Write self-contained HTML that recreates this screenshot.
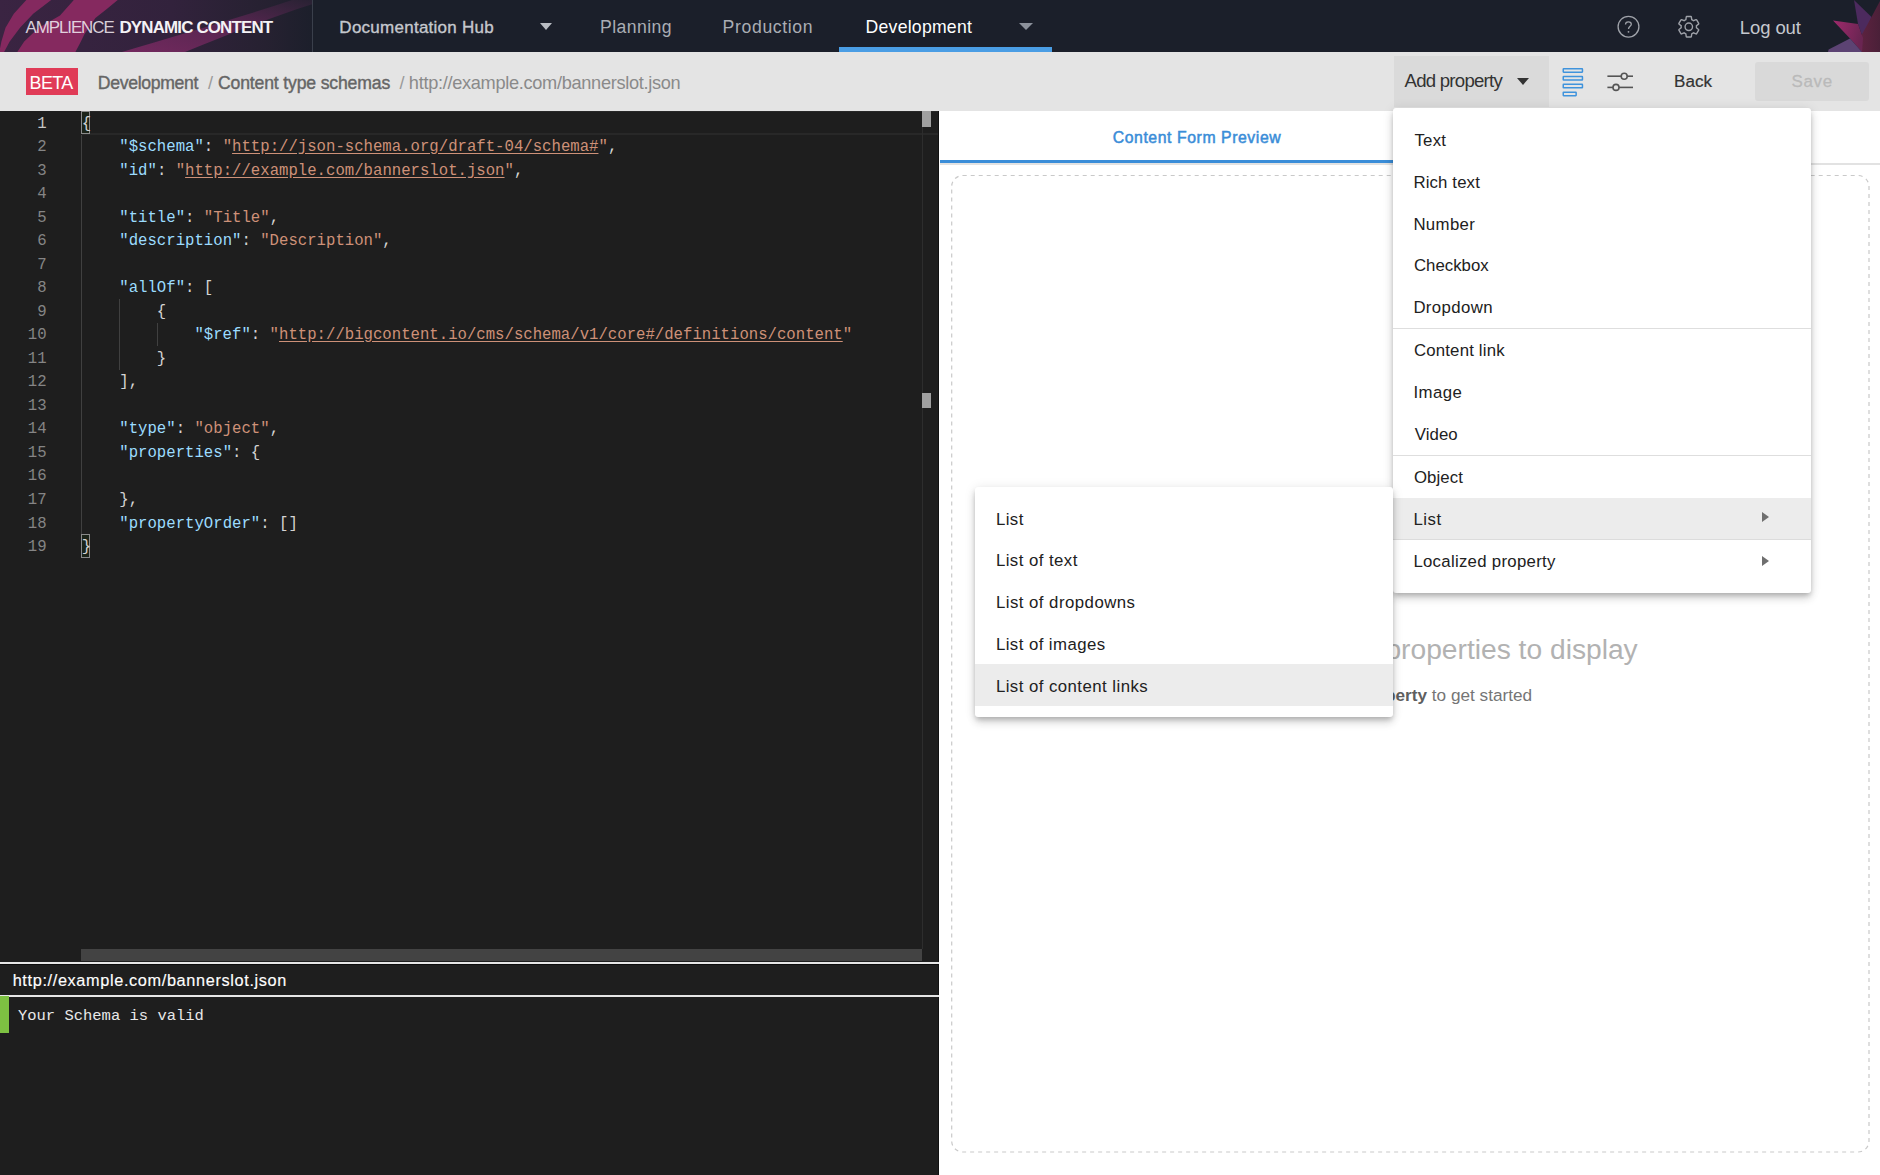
<!DOCTYPE html>
<html><head><meta charset="utf-8"><style>
html,body{margin:0;padding:0;width:1880px;height:1175px;overflow:hidden;background:#fff;position:relative}
.abs{position:absolute}
.t{position:absolute;white-space:pre;font-family:'Liberation Sans',sans-serif}
.m{font-family:'Liberation Mono',monospace}
.tri{width:0;height:0}
.menu{background:#fff;border-radius:3px;box-shadow:0 3px 5px -1px rgba(0,0,0,.2),0 6px 8px 0 rgba(0,0,0,.12),0 1px 12px 0 rgba(0,0,0,.10)}
</style></head><body>
<div class="abs" style="left:0;top:0;width:1880px;height:52px;background:#1b1f2a"></div>
<svg class="abs" style="left:0;top:0" width="313" height="52" viewBox="0 0 313 52">
<defs>
<linearGradient id="lg" x1="0" y1="0" x2="1" y2="0"><stop offset="0" stop-color="#3a2442"/><stop offset="0.55" stop-color="#32223c"/><stop offset="0.85" stop-color="#262131"/><stop offset="1" stop-color="#1c1f2b"/></linearGradient>
<linearGradient id="b3" x1="0" y1="1" x2="1" y2="0"><stop offset="0" stop-color="#7e2a64"/><stop offset="0.6" stop-color="#5a2652"/><stop offset="1" stop-color="#2a2234"/></linearGradient>
</defs>
<rect width="313" height="52" fill="url(#lg)"/>
<polygon points="26.3,0 51.2,0 33.2,13.8 20,27.7 9.7,41.5 4.1,52 0,52 0,48.4 1.4,41.5 5.5,27.7 13.8,13.8" fill="#84295f"/>
<polygon points="73.8,0 117.7,0 106.5,9.3 95.4,17.9 84.4,34.2 80.9,41.5 75.4,52 17.3,52 24.2,41.5 38.7,27.7 60,15.6" fill="#85295f"/>
<path d="M122,52 L185,52 C225,36 268,18 313,4 L313,0 L292,0 C235,19 175,36 122,52 Z" fill="url(#b3)" opacity="0.85"/>
</svg>
<div class="abs" style="left:312px;top:0;width:1px;height:52px;background:#3a3f4b"></div>
<div class="t" style="left:25.50px;top:20px;font-size:16.93px;line-height:16.93px;color:rgba(240,232,240,0.88);letter-spacing:-1.077px;">AMPLIENCE</div>
<div class="t" style="left:119.44px;top:20px;font-size:16.93px;line-height:16.93px;color:#f4f2f5;letter-spacing:-0.837px;font-weight:700;">DYNAMIC CONTENT</div>
<div class="t" style="left:339.35px;top:19px;font-size:17.00px;line-height:17.00px;color:#c5c8ce;letter-spacing:0.258px;-webkit-text-stroke:0.35px #c5c8ce;">Documentation Hub</div>
<div class="abs tri" style="left:539.5px;top:23px;border-left:6.3px solid transparent;border-right:6.3px solid transparent;border-top:7px solid #b9bcc3"></div>
<div class="t" style="left:600.12px;top:19px;font-size:17.64px;line-height:17.64px;color:#aaadb4;letter-spacing:0.402px;">Planning</div>
<div class="t" style="left:722.62px;top:19px;font-size:17.64px;line-height:17.64px;color:#aaadb4;letter-spacing:0.638px;">Production</div>
<div class="t" style="left:865.62px;top:19px;font-size:17.64px;line-height:17.64px;color:#ffffff;letter-spacing:0.239px;">Development</div>
<div class="abs tri" style="left:1019px;top:22.5px;border-left:7px solid transparent;border-right:7px solid transparent;border-top:7.5px solid #8c919b"></div>
<div class="abs" style="left:838.7px;top:46.8px;width:213.3px;height:5.2px;background:#4a9de4"></div>
<svg class="abs" style="left:1616px;top:14px" width="26" height="26" viewBox="0 0 26 26">
<circle cx="12.5" cy="12.7" r="10.4" fill="none" stroke="#9fa2a9" stroke-width="1.3"/>
<path d="M9.5 10.6 C9.5 8.7 10.8 7.8 12.4 7.8 C14 7.8 15.3 8.8 15.3 10.3 C15.3 12.1 12.5 12.5 12.5 14.9" fill="none" stroke="#9fa2a9" stroke-width="1.3"/>
<circle cx="12.5" cy="17.8" r="0.9" fill="#9fa2a9"/>
</svg>
<svg class="abs" style="left:1675.7px;top:14.1px" width="25.6" height="25.6" viewBox="0 0 24 24">
<path fill="none" stroke="#9fa2a9" stroke-width="1.3" d="M19.14,12.94c.04-.3.06-.61.06-.94 0-.32-.02-.64-.07-.94l2.03-1.58a.49.49 0 0 0 .12-.61l-1.92-3.32a.488.488 0 0 0-.59-.22l-2.39.96c-.5-.38-1.03-.7-1.620-.94l-.36-2.54a.484.484 0 0 0-.48-.41h-3.84c-.24 0-.43.17-.47.41l-.36 2.540c-.59.24-1.13.57-1.62.94l-2.39-.96c-.22-.08-.47 0-.59.22L2.74 8.87c-.12.21-.08.47.12.61l2.03 1.58c-.05.3-.09.63-.09.94s.02.64.07.94l-2.03 1.58a.49.49 0 0 0-.12.61l1.92 3.32c.12.22.37.29.59.22l2.39-.96c.5.38 1.03.7 1.62.94l.36 2.54c.05.24.24.41.48.41h3.84c.24 0 .44-.17.47-.41l.36-2.54c.59-.24 1.13-.56 1.62-.94l2.39.96c.22.08.47 0 .59-.22l1.92-3.32c.12-.22.07-.47-.12-.61l-2.01-1.58z"/>
<circle cx="12" cy="12" r="3.5" fill="none" stroke="#9fa2a9" stroke-width="1.3"/>
</svg>
<div class="t" style="left:1739.76px;top:19px;font-size:18.49px;line-height:18.49px;color:#c5c8ce;letter-spacing:-0.086px;">Log out</div>
<svg class="abs" style="left:1810px;top:0" width="70" height="52" viewBox="0 0 70 52">
<defs><linearGradient id="pk" x1="0" y1="0" x2="1" y2="0.3"><stop offset="0" stop-color="#a02a6c"/><stop offset="1" stop-color="#6a2552"/></linearGradient>
<linearGradient id="rd" x1="0" y1="0" x2="1" y2="0"><stop offset="0" stop-color="#5e2240"/><stop offset="1" stop-color="#4a2038"/></linearGradient></defs>
<polygon points="44,0 61.5,17 53,38 48,24" fill="#4c2a5e"/>
<polygon points="61.5,17 70,1 70,52 52,52 50,38" fill="url(#rd)"/>
<polygon points="23,20.4 48,24 53,38 52,52 40,38.5" fill="url(#pk)"/>
<polygon points="18.6,49.6 40,38.5 52,52 18,52" fill="#5c4373"/>
</svg>
<div class="abs" style="left:0;top:52px;width:1880px;height:59px;background:#e4e4e4"></div>
<div class="abs" style="left:26px;top:68px;width:52px;height:27px;background:#e03b57"></div>
<div class="t" style="left:29.50px;top:75px;font-size:17.92px;line-height:17.92px;color:#ffffff;letter-spacing:-0.556px;">BETA</div>
<div class="t" style="left:97.82px;top:75px;font-size:17.64px;line-height:17.64px;color:#666666;letter-spacing:-0.321px;-webkit-text-stroke:0.4px #666666;">Development</div>
<div class="t" style="left:208.00px;top:74px;font-size:18.21px;line-height:18.21px;color:#9a9a9a;letter-spacing:0.000px;">/</div>
<div class="t" style="left:217.97px;top:75px;font-size:17.64px;line-height:17.64px;color:#666666;letter-spacing:-0.164px;-webkit-text-stroke:0.4px #666666;">Content type schemas</div>
<div class="t" style="left:399.50px;top:74px;font-size:18.21px;line-height:18.21px;color:#9a9a9a;letter-spacing:0.000px;">/</div>
<div class="t" style="left:408.86px;top:74px;font-size:18.21px;line-height:18.21px;color:#8a8a8a;letter-spacing:-0.309px;">http://example.com/bannerslot.json</div>
<div class="abs" style="left:1393.8px;top:55.7px;width:155.6px;height:51.6px;background:#dadada"></div>
<div class="t" style="left:1404.50px;top:72px;font-size:18.63px;line-height:18.63px;color:#333333;letter-spacing:-0.754px;">Add property</div>
<div class="abs tri" style="left:1517px;top:78px;border-left:6.3px solid transparent;border-right:6.3px solid transparent;border-top:7.5px solid #333"></div>
<svg class="abs" style="left:1560px;top:66px" width="26" height="33" viewBox="0 0 26 33">
<g fill="none" stroke="#3f93dc" stroke-width="1.5">
<rect x="3.25" y="2.75" width="19.2" height="3.5" rx="0.4"/>
<rect x="3.25" y="10.55" width="19.2" height="3.5" rx="0.4"/>
<rect x="3.25" y="18.35" width="19.2" height="3.5" rx="0.4"/>
<rect x="3.25" y="26.15" width="12.9" height="3.5" rx="0.4"/>
</g></svg>
<svg class="abs" style="left:1605px;top:68px" width="32" height="26" viewBox="0 0 32 26">
<g fill="none" stroke="#555" stroke-width="1.6">
<line x1="2.4" y1="8.2" x2="28" y2="8.2"/>
<line x1="2.4" y1="19.4" x2="28" y2="19.4"/>
<circle cx="19.2" cy="8.2" r="3" fill="#e4e4e4"/>
<circle cx="11" cy="19.4" r="3" fill="#e4e4e4"/>
</g></svg>
<div class="t" style="left:1673.97px;top:73px;font-size:17.07px;line-height:17.07px;color:#333333;letter-spacing:0.039px;-webkit-text-stroke:0.2px #333333;">Back</div>
<div class="abs" style="left:1755px;top:62px;width:114.4px;height:38.7px;background:#d9d9d9;border-radius:3px"></div>
<div class="t" style="left:1791.62px;top:74px;font-size:16.93px;line-height:16.93px;color:#bababa;letter-spacing:0.644px;-webkit-text-stroke:0.3px #bababa;">Save</div>
<div class="abs" style="left:0;top:111px;width:939px;height:1064px;background:#1e1e1e"></div>
<div class="abs" style="left:938px;top:111px;width:1px;height:1064px;background:#111"></div>
<div class="abs" style="left:82px;top:111px;width:856px;height:23.5px;border-top:1.5px solid #282828;border-bottom:2px solid #282828;box-sizing:border-box"></div>
<div class="abs" style="left:81.2px;top:111px;width:8.8px;height:23.3px;border:1px solid #8a8a8a;background:#1b2319;box-sizing:border-box"></div>
<div class="abs" style="left:81.2px;top:534.0px;width:8.8px;height:23.5px;border:1px solid #8a8a8a;background:#1b2319;box-sizing:border-box"></div>
<div class="t m" style="left:37.20px;top:117px;font-size:15.67px;line-height:15.67px;color:#c6c6c6;">1</div>
<div class="t m" style="left:81.70px;top:117px;font-size:15.67px;line-height:15.67px;color:#d4d4d4;">{</div>
<div class="t m" style="left:37.20px;top:140px;font-size:15.67px;line-height:15.67px;color:#858585;">2</div>
<div class="t m" style="left:81.70px;top:140px;font-size:15.67px;line-height:15.67px;color:#d4d4d4;">    <span style="color:#9cdcfe">"$schema"</span>: <span style="color:#ce9178">"</span><span style="color:#ce9178;text-decoration:underline;text-underline-offset:2px">http://json-schema.org/draft-04/schema#</span><span style="color:#ce9178">"</span>,</div>
<div class="t m" style="left:37.20px;top:164px;font-size:15.67px;line-height:15.67px;color:#858585;">3</div>
<div class="t m" style="left:81.70px;top:164px;font-size:15.67px;line-height:15.67px;color:#d4d4d4;">    <span style="color:#9cdcfe">"id"</span>: <span style="color:#ce9178">"</span><span style="color:#ce9178;text-decoration:underline;text-underline-offset:2px">http://example.com/bannerslot.json</span><span style="color:#ce9178">"</span>,</div>
<div class="t m" style="left:37.20px;top:187px;font-size:15.67px;line-height:15.67px;color:#858585;">4</div>
<div class="t m" style="left:37.20px;top:211px;font-size:15.67px;line-height:15.67px;color:#858585;">5</div>
<div class="t m" style="left:81.70px;top:211px;font-size:15.67px;line-height:15.67px;color:#d4d4d4;">    <span style="color:#9cdcfe">"title"</span>: <span style="color:#ce9178">"Title"</span>,</div>
<div class="t m" style="left:37.20px;top:234px;font-size:15.67px;line-height:15.67px;color:#858585;">6</div>
<div class="t m" style="left:81.70px;top:234px;font-size:15.67px;line-height:15.67px;color:#d4d4d4;">    <span style="color:#9cdcfe">"description"</span>: <span style="color:#ce9178">"Description"</span>,</div>
<div class="t m" style="left:37.20px;top:258px;font-size:15.67px;line-height:15.67px;color:#858585;">7</div>
<div class="t m" style="left:37.20px;top:281px;font-size:15.67px;line-height:15.67px;color:#858585;">8</div>
<div class="t m" style="left:81.70px;top:281px;font-size:15.67px;line-height:15.67px;color:#d4d4d4;">    <span style="color:#9cdcfe">"allOf"</span>: [</div>
<div class="t m" style="left:37.20px;top:305px;font-size:15.67px;line-height:15.67px;color:#858585;">9</div>
<div class="t m" style="left:81.70px;top:305px;font-size:15.67px;line-height:15.67px;color:#d4d4d4;">        {</div>
<div class="t m" style="left:27.80px;top:328px;font-size:15.67px;line-height:15.67px;color:#858585;">10</div>
<div class="t m" style="left:81.70px;top:328px;font-size:15.67px;line-height:15.67px;color:#d4d4d4;">            <span style="color:#9cdcfe">"$ref"</span>: <span style="color:#ce9178">"</span><span style="color:#ce9178;text-decoration:underline;text-underline-offset:2px">http://bigcontent.io/cms/schema/v1/core#/definitions/content</span><span style="color:#ce9178">"</span></div>
<div class="t m" style="left:27.80px;top:352px;font-size:15.67px;line-height:15.67px;color:#858585;">11</div>
<div class="t m" style="left:81.70px;top:352px;font-size:15.67px;line-height:15.67px;color:#d4d4d4;">        }</div>
<div class="t m" style="left:27.80px;top:375px;font-size:15.67px;line-height:15.67px;color:#858585;">12</div>
<div class="t m" style="left:81.70px;top:375px;font-size:15.67px;line-height:15.67px;color:#d4d4d4;">    ],</div>
<div class="t m" style="left:27.80px;top:399px;font-size:15.67px;line-height:15.67px;color:#858585;">13</div>
<div class="t m" style="left:27.80px;top:422px;font-size:15.67px;line-height:15.67px;color:#858585;">14</div>
<div class="t m" style="left:81.70px;top:422px;font-size:15.67px;line-height:15.67px;color:#d4d4d4;">    <span style="color:#9cdcfe">"type"</span>: <span style="color:#ce9178">"object"</span>,</div>
<div class="t m" style="left:27.80px;top:446px;font-size:15.67px;line-height:15.67px;color:#858585;">15</div>
<div class="t m" style="left:81.70px;top:446px;font-size:15.67px;line-height:15.67px;color:#d4d4d4;">    <span style="color:#9cdcfe">"properties"</span>: {</div>
<div class="t m" style="left:27.80px;top:469px;font-size:15.67px;line-height:15.67px;color:#858585;">16</div>
<div class="t m" style="left:27.80px;top:493px;font-size:15.67px;line-height:15.67px;color:#858585;">17</div>
<div class="t m" style="left:81.70px;top:493px;font-size:15.67px;line-height:15.67px;color:#d4d4d4;">    },</div>
<div class="t m" style="left:27.80px;top:517px;font-size:15.67px;line-height:15.67px;color:#858585;">18</div>
<div class="t m" style="left:81.70px;top:517px;font-size:15.67px;line-height:15.67px;color:#d4d4d4;">    <span style="color:#9cdcfe">"propertyOrder"</span>: []</div>
<div class="t m" style="left:27.80px;top:540px;font-size:15.67px;line-height:15.67px;color:#858585;">19</div>
<div class="t m" style="left:81.70px;top:540px;font-size:15.67px;line-height:15.67px;color:#d4d4d4;">}</div>
<div class="abs" style="left:81px;top:134.5px;width:1px;height:399.5px;background:#404040"></div>
<div class="abs" style="left:119px;top:299.0px;width:1px;height:70.5px;background:#404040"></div>
<div class="abs" style="left:157px;top:322.5px;width:1px;height:23.5px;background:#404040"></div>
<div class="abs" style="left:921.5px;top:111px;width:1px;height:838px;background:#2d2d2d"></div>
<div class="abs" style="left:922.3px;top:111px;width:8.5px;height:15.5px;background:#a0a0a0"></div>
<div class="abs" style="left:922.3px;top:393px;width:8.5px;height:15px;background:#a0a0a0"></div>
<div class="abs" style="left:81px;top:949.4px;width:841px;height:12px;background:#434343"></div>
<div class="abs" style="left:0;top:962px;width:939px;height:1.6px;background:#e6e6e6"></div>
<div class="abs" style="left:0;top:963.6px;width:939px;height:1px;background:#0c0c0c"></div>
<div class="t" style="left:12.66px;top:972px;font-size:16.29px;line-height:16.29px;color:#ffffff;letter-spacing:0.642px;-webkit-text-stroke:0.15px #ffffff;">http://example.com/bannerslot.json</div>
<div class="abs" style="left:0;top:995px;width:939px;height:1.5px;background:#e6e6e6"></div>
<div class="abs" style="left:0;top:996.3px;width:8.8px;height:36.5px;background:#7dc142"></div>
<div class="t m" style="left:17.90px;top:1009px;font-size:15.5px;line-height:15.5px;color:#e8e8e8;">Your Schema is valid</div>
<div class="abs" style="left:939px;top:111px;width:941px;height:1064px;background:#ffffff"></div>
<div class="abs" style="left:940px;top:163px;width:940px;height:1.5px;background:#e2e2e2"></div>
<div class="abs" style="left:940px;top:160px;width:470px;height:3px;background:#3a8dd8"></div>
<div class="t" style="left:1112.71px;top:130px;font-size:15.79px;line-height:15.79px;color:#3a8dd8;letter-spacing:0.578px;-webkit-text-stroke:0.5px #3a8dd8;">Content Form Preview</div>
<svg class="abs" style="left:950px;top:174px" width="922" height="981" viewBox="0 0 922 981">
<rect x="1.7" y="1.5" width="917.3" height="976.5" rx="11" ry="11" fill="none" stroke="#c9c9c9" stroke-width="1.2" stroke-dasharray="4 4"/>
</svg>
<div class="t" style="right:242.30px;top:635px;font-size:28.20px;line-height:28.20px;color:#b2b2b2;letter-spacing:0.000px;">There are no properties to display</div>
<div class="t" style="right:347.83px;top:687.00px;font-size:17.2px;line-height:17.2px;color:#757575">Click <b style="color:#5f5f5f">Add property</b> to get started</div>
<div class="abs menu" style="left:1393.2px;top:108px;width:417.8px;height:484.8px"></div>
<div class="abs" style="left:1393.2px;top:327.8px;width:417.8px;height:1.3px;background:#dedede"></div>
<div class="abs" style="left:1393.2px;top:454.6px;width:417.8px;height:1.3px;background:#dedede"></div>
<div class="abs" style="left:1393.2px;top:497.6px;width:417.8px;height:41.7px;background:#ececec"></div>
<div class="abs" style="left:1393.2px;top:539px;width:417.8px;height:1.3px;background:#dcdcdc"></div>
<div class="t" style="left:1414.44px;top:133px;font-size:16.79px;line-height:16.79px;color:#212121;letter-spacing:0.240px;">Text</div>
<div class="t" style="left:1413.39px;top:175px;font-size:16.79px;line-height:16.79px;color:#212121;letter-spacing:0.145px;">Rich text</div>
<div class="t" style="left:1413.39px;top:217px;font-size:16.79px;line-height:16.79px;color:#212121;letter-spacing:0.359px;">Number</div>
<div class="t" style="left:1413.91px;top:258px;font-size:16.79px;line-height:16.79px;color:#212121;letter-spacing:0.021px;">Checkbox</div>
<div class="t" style="left:1413.39px;top:300px;font-size:16.79px;line-height:16.79px;color:#212121;letter-spacing:0.378px;">Dropdown</div>
<div class="t" style="left:1413.91px;top:343px;font-size:16.79px;line-height:16.79px;color:#212121;letter-spacing:0.190px;">Content link</div>
<div class="t" style="left:1413.39px;top:385px;font-size:16.79px;line-height:16.79px;color:#212121;letter-spacing:0.485px;">Image</div>
<div class="t" style="left:1414.70px;top:427px;font-size:16.79px;line-height:16.79px;color:#212121;letter-spacing:0.088px;">Video</div>
<div class="t" style="left:1413.91px;top:470px;font-size:16.79px;line-height:16.79px;color:#212121;letter-spacing:0.104px;">Object</div>
<div class="t" style="left:1413.39px;top:512px;font-size:16.79px;line-height:16.79px;color:#212121;letter-spacing:0.545px;">List</div>
<div class="t" style="left:1413.39px;top:554px;font-size:16.79px;line-height:16.79px;color:#212121;letter-spacing:0.285px;">Localized property</div>
<div class="abs tri" style="left:1762.3px;top:512.4px;border-top:5.9px solid transparent;border-bottom:5.9px solid transparent;border-left:7.2px solid #6f6f6f"></div>
<div class="abs tri" style="left:1762.3px;top:555.5px;border-top:5.9px solid transparent;border-bottom:5.9px solid transparent;border-left:7.2px solid #6f6f6f"></div>
<div class="abs menu" style="left:975.3px;top:487.3px;width:417.9px;height:229.7px"></div>
<div class="abs" style="left:975.3px;top:664.4px;width:417.9px;height:41.6px;background:#ececec"></div>
<div class="t" style="left:995.89px;top:512px;font-size:16.79px;line-height:16.79px;color:#212121;letter-spacing:0.445px;">List</div>
<div class="t" style="left:995.89px;top:553px;font-size:16.79px;line-height:16.79px;color:#212121;letter-spacing:0.450px;">List of text</div>
<div class="t" style="left:995.89px;top:595px;font-size:16.79px;line-height:16.79px;color:#212121;letter-spacing:0.473px;">List of dropdowns</div>
<div class="t" style="left:995.89px;top:637px;font-size:16.79px;line-height:16.79px;color:#212121;letter-spacing:0.445px;">List of images</div>
<div class="t" style="left:995.89px;top:679px;font-size:16.79px;line-height:16.79px;color:#212121;letter-spacing:0.454px;">List of content links</div>
</body></html>
